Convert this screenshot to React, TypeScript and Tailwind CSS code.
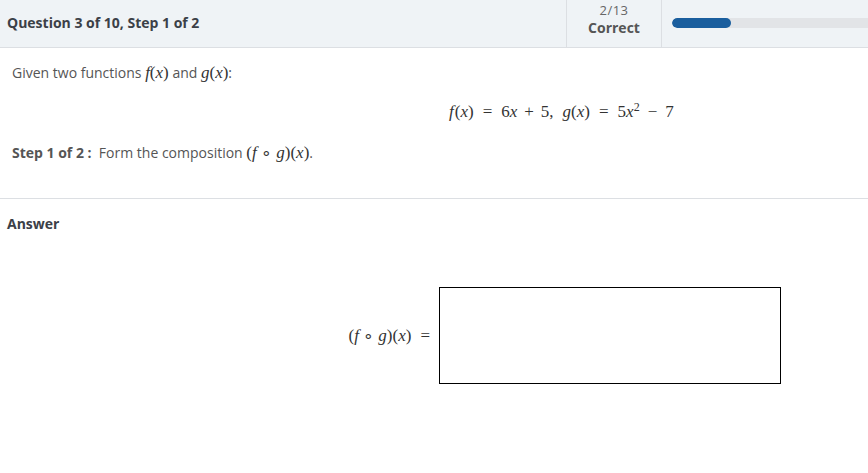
import React from "react";

const serif = { fontFamily: '"Liberation Serif", "Times New Roman", serif' };

function M({ children }: { children: React.ReactNode }) {
  return <span className="font-['Liberation_Serif',serif] text-[17px] text-[#333]">{children}</span>;
}

export default function App() {
  return (
    <div className="w-[868px] h-[473px] bg-white font-['Open_Sans',sans-serif] text-[#555] overflow-hidden">
      <div className="flex h-[48px] bg-[#eff3f6] border-b border-[#dcdfe3]">
        <div className="flex-1 flex items-center pl-[7px] pb-[3px] text-[14px] font-bold text-[#3b4047]">
          Question 3 of 10, Step 1 of 2
        </div>
        <div className="w-[96px] border-l border-r border-[#dcdfe3] flex flex-col items-center pt-[1px] leading-[18px] mr-[10px]">
          <span className="text-[13px] text-[#666] tracking-[0.5px]">2/13</span>
          <span className="text-[14px] font-bold text-[#555]">Correct</span>
        </div>
        <div className="flex-1 max-w-[196px] flex items-start pt-[18px]">
          <div className="w-full h-[10px] bg-[#e2e4e7] rounded-l-[5px] overflow-hidden">
            <div className="h-full w-[59px] bg-[#1a5e9e] rounded-[5px]" />
          </div>
        </div>
      </div>
      <div className="border-b border-[#dcdfe3] h-[151px] px-[12px] pt-[15px]">
        <div className="text-[14px] text-[#555] leading-[20px]">
          Given two functions <M><i>f</i>(<i>x</i>)</M> and <M><i>g</i>(<i>x</i>)</M>:
        </div>
        <div className="mt-[19px] pl-[437px] text-[17px] text-[#333] leading-[20px] flex items-baseline" style={serif}>
          <span><i className="mr-[1px]">f</i>(<i>x</i>)</span>
          <span className="mx-[9px]">=</span>
          <span>6<i>x</i></span>
          <span className="mx-[7px]">+</span>
          <span>5,</span>
          <span className="ml-[9px]"><i>g</i>(<i>x</i>)</span>
          <span className="mx-[9px]">=</span>
          <span>5<i>x</i><sup className="text-[12px]">2</sup></span>
          <span className="mx-[8px]">−</span>
          <span>7</span>
        </div>
        <div className="mt-[21px] text-[14px] leading-[20px]">
          <span className="font-bold text-[#555]">Step 1 of 2 :</span>&nbsp; Form the composition{" "}
          <M>(<i>f</i>&nbsp;∘&nbsp;<i>g</i>)(<i>x</i>)</M>.
        </div>
      </div>
      <div className="pl-[7px] pt-[15px] text-[14px] font-bold text-[#3b4047] leading-[20px]">Answer</div>
      <div className="flex items-center mt-[53px]">
        <div className="w-[432px] text-right pr-[2px] text-[17px] text-[#333]" style={serif}>
          (<i>f</i>&nbsp;∘&nbsp;<i>g</i>)(<i>x</i>)<span className="ml-[9px]">=</span>
        </div>
        <div className="ml-[7px] w-[342px] h-[97px] border-[1.5px] border-black" />
      </div>
    </div>
  );
}
